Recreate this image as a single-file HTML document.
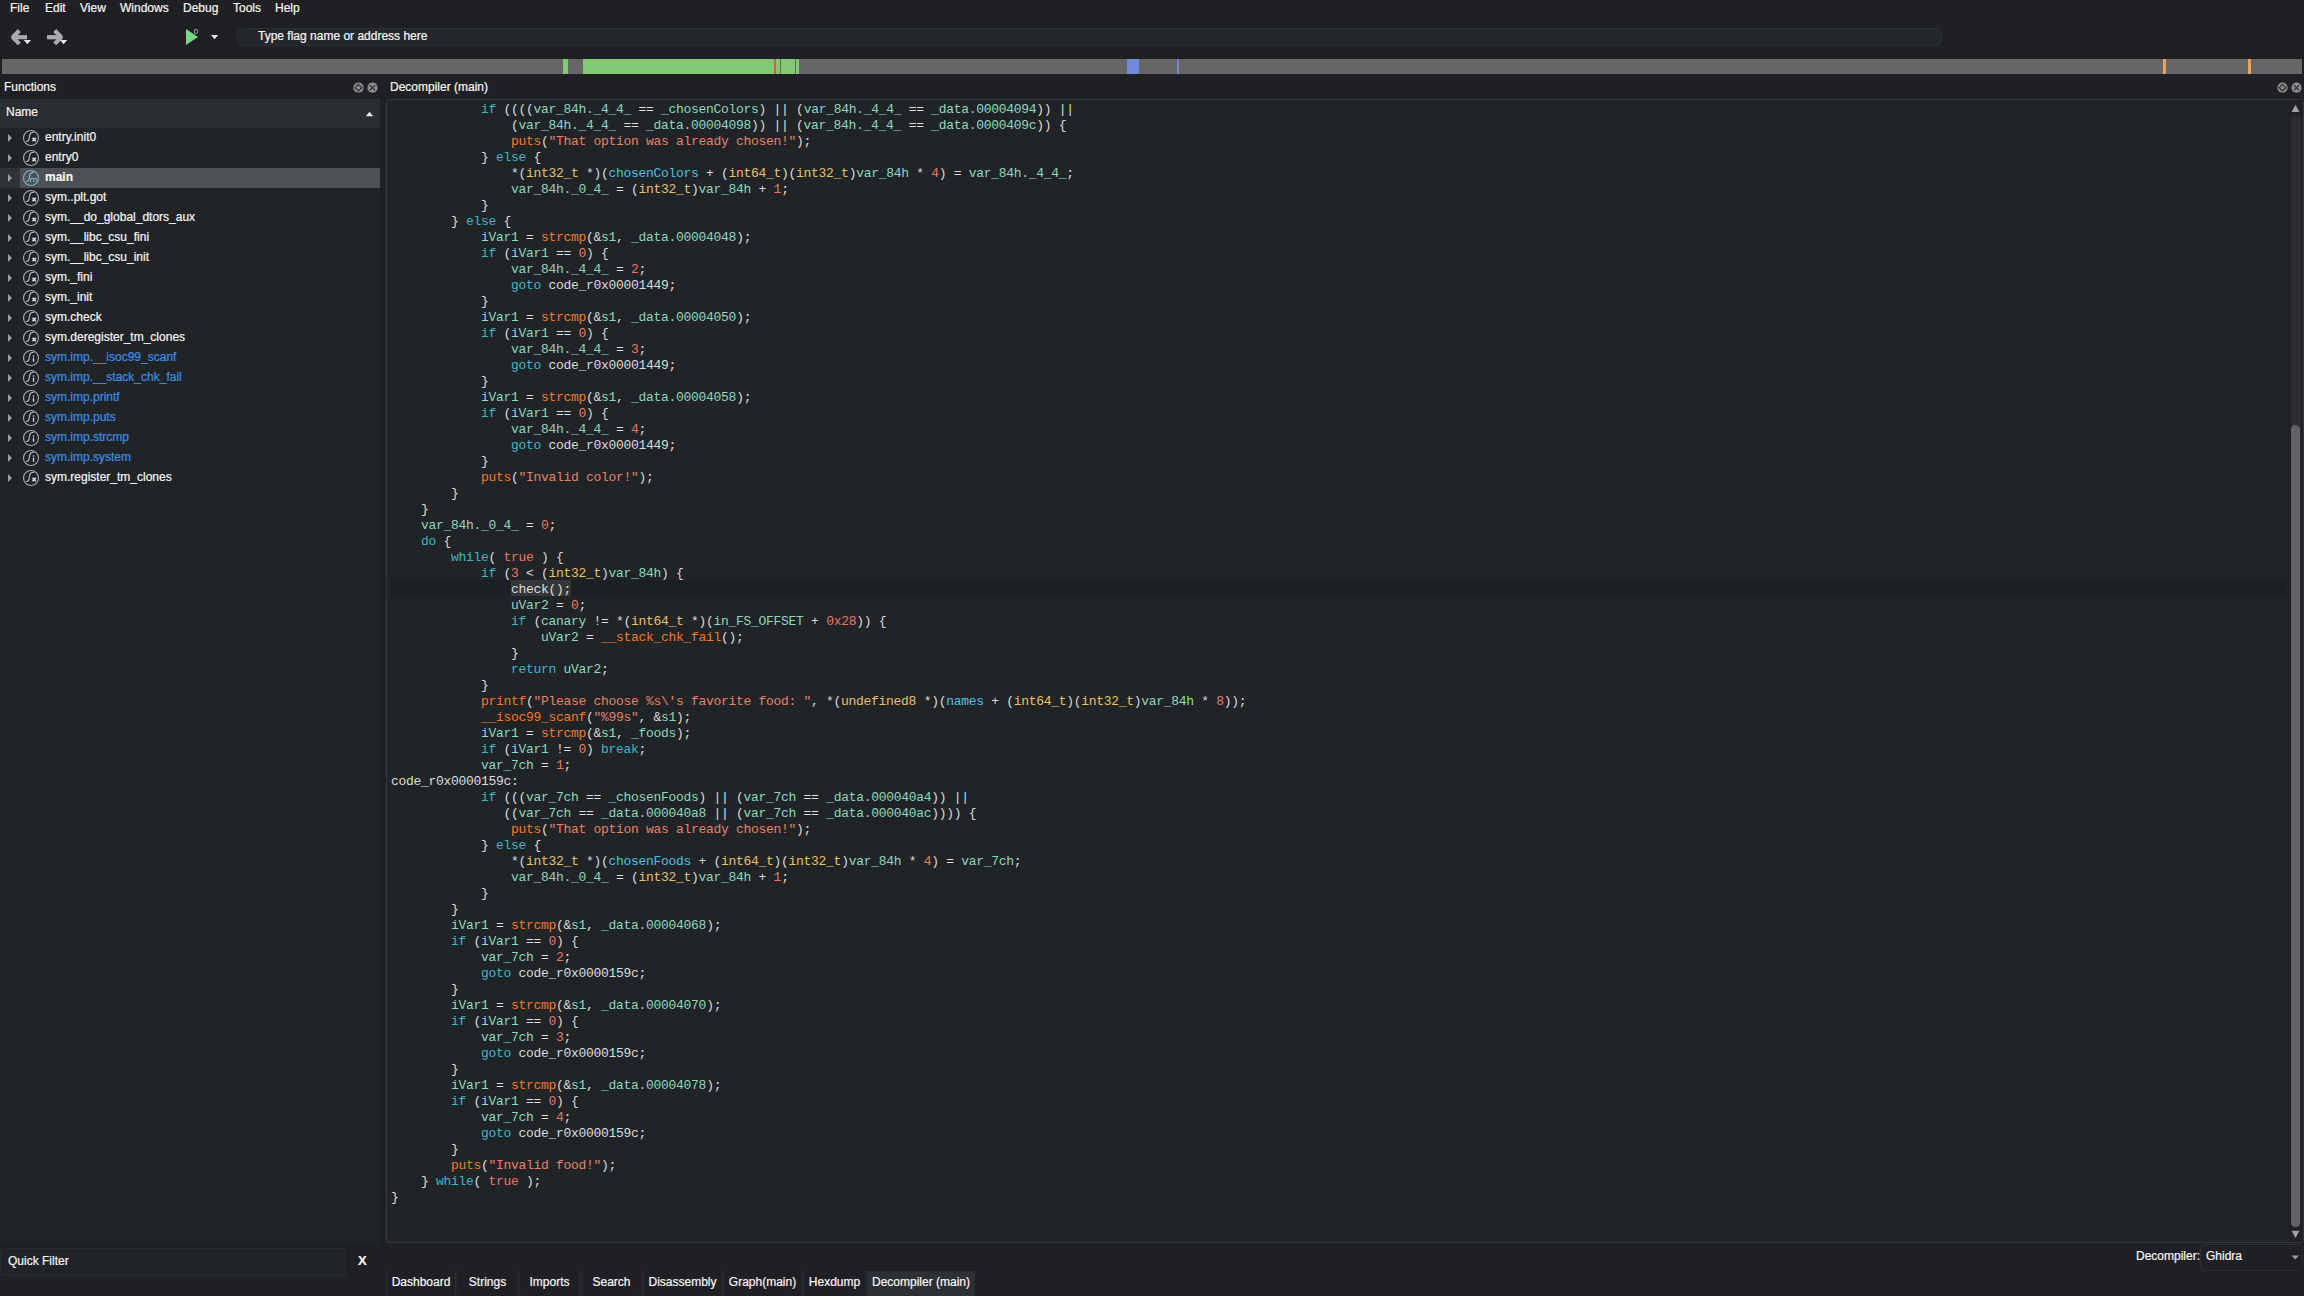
<!DOCTYPE html>
<html><head><meta charset="utf-8">
<style>
*{margin:0;padding:0;box-sizing:border-box}
html,body{width:2304px;height:1296px;overflow:hidden;background:#1f2023}
body{position:relative;font-family:"Liberation Sans",sans-serif;font-size:12px;color:#f6f6f6}
.t,.row span,.tab{-webkit-text-stroke:0.2px currentColor}
.a{position:absolute}
.t{position:absolute;line-height:14px;white-space:pre}
/* menu */
.menu .t{top:1px}
/* search */
#search{left:237px;top:28px;width:1705px;height:18px;border:1px solid #2c2f32;border-radius:5px;background:#25282b}
/* overview */
#ov{left:2px;top:59px;width:2300px;height:15px;background:#666}
#ov div{position:absolute;top:0;height:15px}
.g{background:#82c973}
.r{background:#e0584a}
.dk{background:#555}
.b{background:#7189d8}
.o{background:#e6a45c}
/* dock buttons */
.dbtn{position:absolute;width:11px;height:11px;border-radius:50%;background:#8f8f8f}
/* functions */
#fhead{left:0;top:99px;width:380px;height:29px;background:#2a2d31}
#flist{left:0;top:128px;width:380px;height:1118px;background:#212427;border-bottom-right-radius:4px}
.row{position:absolute;left:0;width:380px;height:20px}
.row.sel{background:#2f3236}
.row.sel::before{content:"";position:absolute;left:20px;top:0;width:360px;height:20px;background:#4d5055}
.row .tri{position:absolute;left:7.8px;top:6.2px;width:0;height:0;border-top:4.2px solid transparent;border-bottom:4.2px solid transparent;border-left:4.8px solid #a0a0a0}
.row .fi{position:absolute;left:22px;top:1px}
.row span{position:absolute;left:45px;top:2px;line-height:14px;white-space:pre;color:#f6f6f6}
.row.imp span{color:#3d8fe6}
.row.sel span{font-weight:bold}
/* quick filter */
#qf{left:0;top:1248px;width:346px;height:28px;border:1px solid #2a2d30;border-radius:3px;background:#212427}
/* decompiler panel */
#dp{left:386px;top:99px;width:1918px;height:1144px;border:1px solid #35383b;border-radius:3px;background:#212427;overflow:hidden}
#curline{left:4px;top:480px;width:1895px;height:16px;background:#1b2022}
#chk{left:124px;top:480px;width:60px;height:16px;background:#34373a}
#code{left:4px;top:2px;font-family:"Liberation Mono",monospace;font-size:13px;letter-spacing:-0.3px;color:#dcdcdc}
.cl{position:absolute;white-space:pre;line-height:16px;height:16px;transform:scaleY(1.03);transform-origin:0 11px}
.cl i{font-style:normal}
.kw{color:#3fb6c6}.var{color:#8cd8bc}.fn{color:#f07a2c}.st{color:#e4826a}.num{color:#ea7862}.ty{color:#e8c06a}.gl{color:#4cc0e4}
#sbcol{left:1901px;top:0;width:15px;height:1142px;background:#1f2124}
#sbtrack{left:1904px;top:15px;width:10px;height:1113px;border-radius:5px;background:#2b2c30}
#sbhandle{left:1904px;top:325px;width:9px;height:802px;border-radius:4.5px;background:#616263}
/* combobox */
#combo{left:2200px;top:1244px;width:103px;height:27px;border:1px solid #2b2e31;border-radius:3px;background:#1f2023}
/* tabs */
.tab{position:absolute;top:1271px;height:26px;border:1px solid #2b2d31;border-top:none;border-radius:0 0 3px 3px;text-align:center;line-height:14px;padding-top:4px;white-space:pre}
.tab.act{background:#2c2f33}
</style></head><body>
<!-- menu bar -->
<div class="menu">
<div class="t" style="left:10px">File</div>
<div class="t" style="left:45px">Edit</div>
<div class="t" style="left:80px">View</div>
<div class="t" style="left:120px">Windows</div>
<div class="t" style="left:183px">Debug</div>
<div class="t" style="left:233px">Tools</div>
<div class="t" style="left:275px">Help</div>
</div>
<!-- toolbar -->
<svg class="a" style="left:0;top:20px" width="240" height="35" viewBox="0 20 240 35">
 <path d="M19.3 30.5 L12.8 37.2 L19.3 43.9" fill="none" stroke="#a9aaae" stroke-width="4.2" stroke-linejoin="bevel"/>
 <rect x="14" y="35.1" width="13" height="4.2" fill="#a9aaae"/>
 <path d="M23.8 40 L31 40 L27.4 44.2 Z" fill="#e6e6e6"/>
 <path d="M54.7 30.5 L61.2 37.2 L54.7 43.9" fill="none" stroke="#a9aaae" stroke-width="4.2" stroke-linejoin="bevel"/>
 <rect x="47" y="35.1" width="13" height="4.2" fill="#a9aaae"/>
 <path d="M60 40 L67.2 40 L63.6 44.2 Z" fill="#e6e6e6"/>
 <path d="M186 29 L198 37 L186 45 Z" fill="#76da84"/>
 <path d="M194.6 29.3V33.5H195.9Q197.7 33.5 197.7 31.4Q197.7 29.3 195.9 29.3Z" fill="none" stroke="#a4a4a4" stroke-width="0.9"/>
 <path d="M211 35 L218.2 35 L214.6 39.3 Z" fill="#e6e6e6"/>
</svg>
<div id="search" class="a"></div>
<div class="t" style="left:258px;top:29px">Type flag name or address here</div>
<!-- overview bar -->
<div id="ov" class="a">
 <div class="g" style="left:561px;width:5px"></div>
 <div class="g" style="left:581px;width:191px"></div>
 <div class="r" style="left:772px;width:2px"></div>
 <div class="g" style="left:774px;width:4px"></div>
 <div class="g" style="left:779px;width:14px"></div>
 <div class="g" style="left:794px;width:3px"></div>
 <div class="b" style="left:1125px;width:12px"></div>
 <div class="b" style="left:1175px;width:2px"></div>
 <div class="o" style="left:2161px;width:3px"></div>
 <div class="o" style="left:2246px;width:3px"></div>
</div>
<!-- dock titles -->
<div class="t" style="left:4px;top:80px">Functions</div>
<div class="t" style="left:390px;top:80px">Decompiler (main)</div>
<svg class="a" style="left:0;top:75px" width="2304" height="25">
 <g fill="#8c8c8c"><circle cx="358.5" cy="12.7" r="5.1"/><circle cx="372.5" cy="12.7" r="5.1"/><circle cx="2282.5" cy="12.7" r="5.1"/><circle cx="2296.5" cy="12.7" r="5.1"/></g>
 <g fill="none" stroke="#2c2c2c" stroke-width="1.2">
  <path d="M358.5 9.4 L361.8 12.7 L358.5 16 L355.2 12.7 Z"/>
  <path d="M369.9 10.1 L375.1 15.3 M375.1 10.1 L369.9 15.3"/>
  <path d="M2282.5 9.4 L2285.8 12.7 L2282.5 16 L2279.2 12.7 Z"/>
  <path d="M2293.9 10.1 L2299.1 15.3 M2299.1 10.1 L2293.9 15.3"/>
 </g>
</svg>
<!-- functions panel -->
<div id="fhead" class="a"></div>
<div class="t" style="left:6px;top:105px">Name</div>
<svg class="a" style="left:365px;top:111px" width="9" height="6"><path d="M0.8 5.3 L4.5 0.8 L8.2 5.3 Z" fill="#e8e8e8"/></svg>
<div id="flist" class="a">
<div class="row" style="top:0px"><div class="tri"></div><svg class="fi" width="18" height="18" viewBox="0 0 18 18"><circle cx="9" cy="9" r="7.5" fill="none" stroke="#a9a9a9" stroke-width="1.1"/><path d="M4 12.5Q6.3 12.8 6.9 10.5L7.9 5.5Q8.6 3 12.2 3.3" fill="none" stroke="#c4c4c4" stroke-width="1.1"/><path d="M10.5 8.9L13.9 12.3M13.9 8.9L10.5 12.3" stroke="#dadada" stroke-width="1.6"/></svg><span>entry.init0</span></div>
<div class="row" style="top:20px"><div class="tri"></div><svg class="fi" width="18" height="18" viewBox="0 0 18 18"><circle cx="9" cy="9" r="7.5" fill="none" stroke="#a9a9a9" stroke-width="1.1"/><path d="M4 12.5Q6.3 12.8 6.9 10.5L7.9 5.5Q8.6 3 12.2 3.3" fill="none" stroke="#c4c4c4" stroke-width="1.1"/><path d="M10.5 8.9L13.9 12.3M13.9 8.9L10.5 12.3" stroke="#dadada" stroke-width="1.6"/></svg><span>entry0</span></div>
<div class="row sel" style="top:40px"><div class="tri"></div><svg class="fi" width="18" height="18" viewBox="0 0 18 18"><circle cx="9" cy="9" r="7.5" fill="none" stroke="#7fb0c8" stroke-width="1.1"/><path d="M4 12.5Q6.3 12.8 6.9 10.5L7.9 5.5Q8.6 3 12.2 3.3" fill="none" stroke="#8cbcd2" stroke-width="1.1"/><path d="M8.6 13V9.6M8.6 10.6Q8.6 9.3 10.2 9.3Q11.8 9.3 11.8 10.6V13M11.8 10.6Q11.8 9.3 13.4 9.3Q15 9.3 15 10.8V13" fill="none" stroke="#8cbcd2" stroke-width="1"/></svg><span>main</span></div>
<div class="row" style="top:60px"><div class="tri"></div><svg class="fi" width="18" height="18" viewBox="0 0 18 18"><circle cx="9" cy="9" r="7.5" fill="none" stroke="#a9a9a9" stroke-width="1.1"/><path d="M4 12.5Q6.3 12.8 6.9 10.5L7.9 5.5Q8.6 3 12.2 3.3" fill="none" stroke="#c4c4c4" stroke-width="1.1"/><path d="M10.5 8.9L13.9 12.3M13.9 8.9L10.5 12.3" stroke="#dadada" stroke-width="1.6"/></svg><span>sym..plt.got</span></div>
<div class="row" style="top:80px"><div class="tri"></div><svg class="fi" width="18" height="18" viewBox="0 0 18 18"><circle cx="9" cy="9" r="7.5" fill="none" stroke="#a9a9a9" stroke-width="1.1"/><path d="M4 12.5Q6.3 12.8 6.9 10.5L7.9 5.5Q8.6 3 12.2 3.3" fill="none" stroke="#c4c4c4" stroke-width="1.1"/><path d="M10.5 8.9L13.9 12.3M13.9 8.9L10.5 12.3" stroke="#dadada" stroke-width="1.6"/></svg><span>sym.__do_global_dtors_aux</span></div>
<div class="row" style="top:100px"><div class="tri"></div><svg class="fi" width="18" height="18" viewBox="0 0 18 18"><circle cx="9" cy="9" r="7.5" fill="none" stroke="#a9a9a9" stroke-width="1.1"/><path d="M4 12.5Q6.3 12.8 6.9 10.5L7.9 5.5Q8.6 3 12.2 3.3" fill="none" stroke="#c4c4c4" stroke-width="1.1"/><path d="M10.5 8.9L13.9 12.3M13.9 8.9L10.5 12.3" stroke="#dadada" stroke-width="1.6"/></svg><span>sym.__libc_csu_fini</span></div>
<div class="row" style="top:120px"><div class="tri"></div><svg class="fi" width="18" height="18" viewBox="0 0 18 18"><circle cx="9" cy="9" r="7.5" fill="none" stroke="#a9a9a9" stroke-width="1.1"/><path d="M4 12.5Q6.3 12.8 6.9 10.5L7.9 5.5Q8.6 3 12.2 3.3" fill="none" stroke="#c4c4c4" stroke-width="1.1"/><path d="M10.5 8.9L13.9 12.3M13.9 8.9L10.5 12.3" stroke="#dadada" stroke-width="1.6"/></svg><span>sym.__libc_csu_init</span></div>
<div class="row" style="top:140px"><div class="tri"></div><svg class="fi" width="18" height="18" viewBox="0 0 18 18"><circle cx="9" cy="9" r="7.5" fill="none" stroke="#a9a9a9" stroke-width="1.1"/><path d="M4 12.5Q6.3 12.8 6.9 10.5L7.9 5.5Q8.6 3 12.2 3.3" fill="none" stroke="#c4c4c4" stroke-width="1.1"/><path d="M10.5 8.9L13.9 12.3M13.9 8.9L10.5 12.3" stroke="#dadada" stroke-width="1.6"/></svg><span>sym._fini</span></div>
<div class="row" style="top:160px"><div class="tri"></div><svg class="fi" width="18" height="18" viewBox="0 0 18 18"><circle cx="9" cy="9" r="7.5" fill="none" stroke="#a9a9a9" stroke-width="1.1"/><path d="M4 12.5Q6.3 12.8 6.9 10.5L7.9 5.5Q8.6 3 12.2 3.3" fill="none" stroke="#c4c4c4" stroke-width="1.1"/><path d="M10.5 8.9L13.9 12.3M13.9 8.9L10.5 12.3" stroke="#dadada" stroke-width="1.6"/></svg><span>sym._init</span></div>
<div class="row" style="top:180px"><div class="tri"></div><svg class="fi" width="18" height="18" viewBox="0 0 18 18"><circle cx="9" cy="9" r="7.5" fill="none" stroke="#a9a9a9" stroke-width="1.1"/><path d="M4 12.5Q6.3 12.8 6.9 10.5L7.9 5.5Q8.6 3 12.2 3.3" fill="none" stroke="#c4c4c4" stroke-width="1.1"/><path d="M10.5 8.9L13.9 12.3M13.9 8.9L10.5 12.3" stroke="#dadada" stroke-width="1.6"/></svg><span>sym.check</span></div>
<div class="row" style="top:200px"><div class="tri"></div><svg class="fi" width="18" height="18" viewBox="0 0 18 18"><circle cx="9" cy="9" r="7.5" fill="none" stroke="#a9a9a9" stroke-width="1.1"/><path d="M4 12.5Q6.3 12.8 6.9 10.5L7.9 5.5Q8.6 3 12.2 3.3" fill="none" stroke="#c4c4c4" stroke-width="1.1"/><path d="M10.5 8.9L13.9 12.3M13.9 8.9L10.5 12.3" stroke="#dadada" stroke-width="1.6"/></svg><span>sym.deregister_tm_clones</span></div>
<div class="row imp" style="top:220px"><div class="tri"></div><svg class="fi" width="18" height="18" viewBox="0 0 18 18"><circle cx="9" cy="9" r="7.5" fill="none" stroke="#a9a9a9" stroke-width="1.1"/><path d="M4 12.5Q6.3 12.8 6.9 10.5L7.9 5.5Q8.6 3 12.2 3.3" fill="none" stroke="#c4c4c4" stroke-width="1.1"/><path d="M11.5 8.7V12.8" stroke="#d4d4d4" stroke-width="1.3"/><path d="M11.5 6.3V7.8" stroke="#d4d4d4" stroke-width="1.3"/></svg><span>sym.imp.__isoc99_scanf</span></div>
<div class="row imp" style="top:240px"><div class="tri"></div><svg class="fi" width="18" height="18" viewBox="0 0 18 18"><circle cx="9" cy="9" r="7.5" fill="none" stroke="#a9a9a9" stroke-width="1.1"/><path d="M4 12.5Q6.3 12.8 6.9 10.5L7.9 5.5Q8.6 3 12.2 3.3" fill="none" stroke="#c4c4c4" stroke-width="1.1"/><path d="M11.5 8.7V12.8" stroke="#d4d4d4" stroke-width="1.3"/><path d="M11.5 6.3V7.8" stroke="#d4d4d4" stroke-width="1.3"/></svg><span>sym.imp.__stack_chk_fail</span></div>
<div class="row imp" style="top:260px"><div class="tri"></div><svg class="fi" width="18" height="18" viewBox="0 0 18 18"><circle cx="9" cy="9" r="7.5" fill="none" stroke="#a9a9a9" stroke-width="1.1"/><path d="M4 12.5Q6.3 12.8 6.9 10.5L7.9 5.5Q8.6 3 12.2 3.3" fill="none" stroke="#c4c4c4" stroke-width="1.1"/><path d="M11.5 8.7V12.8" stroke="#d4d4d4" stroke-width="1.3"/><path d="M11.5 6.3V7.8" stroke="#d4d4d4" stroke-width="1.3"/></svg><span>sym.imp.printf</span></div>
<div class="row imp" style="top:280px"><div class="tri"></div><svg class="fi" width="18" height="18" viewBox="0 0 18 18"><circle cx="9" cy="9" r="7.5" fill="none" stroke="#a9a9a9" stroke-width="1.1"/><path d="M4 12.5Q6.3 12.8 6.9 10.5L7.9 5.5Q8.6 3 12.2 3.3" fill="none" stroke="#c4c4c4" stroke-width="1.1"/><path d="M11.5 8.7V12.8" stroke="#d4d4d4" stroke-width="1.3"/><path d="M11.5 6.3V7.8" stroke="#d4d4d4" stroke-width="1.3"/></svg><span>sym.imp.puts</span></div>
<div class="row imp" style="top:300px"><div class="tri"></div><svg class="fi" width="18" height="18" viewBox="0 0 18 18"><circle cx="9" cy="9" r="7.5" fill="none" stroke="#a9a9a9" stroke-width="1.1"/><path d="M4 12.5Q6.3 12.8 6.9 10.5L7.9 5.5Q8.6 3 12.2 3.3" fill="none" stroke="#c4c4c4" stroke-width="1.1"/><path d="M11.5 8.7V12.8" stroke="#d4d4d4" stroke-width="1.3"/><path d="M11.5 6.3V7.8" stroke="#d4d4d4" stroke-width="1.3"/></svg><span>sym.imp.strcmp</span></div>
<div class="row imp" style="top:320px"><div class="tri"></div><svg class="fi" width="18" height="18" viewBox="0 0 18 18"><circle cx="9" cy="9" r="7.5" fill="none" stroke="#a9a9a9" stroke-width="1.1"/><path d="M4 12.5Q6.3 12.8 6.9 10.5L7.9 5.5Q8.6 3 12.2 3.3" fill="none" stroke="#c4c4c4" stroke-width="1.1"/><path d="M11.5 8.7V12.8" stroke="#d4d4d4" stroke-width="1.3"/><path d="M11.5 6.3V7.8" stroke="#d4d4d4" stroke-width="1.3"/></svg><span>sym.imp.system</span></div>
<div class="row" style="top:340px"><div class="tri"></div><svg class="fi" width="18" height="18" viewBox="0 0 18 18"><circle cx="9" cy="9" r="7.5" fill="none" stroke="#a9a9a9" stroke-width="1.1"/><path d="M4 12.5Q6.3 12.8 6.9 10.5L7.9 5.5Q8.6 3 12.2 3.3" fill="none" stroke="#c4c4c4" stroke-width="1.1"/><path d="M10.5 8.9L13.9 12.3M13.9 8.9L10.5 12.3" stroke="#dadada" stroke-width="1.6"/></svg><span>sym.register_tm_clones</span></div>
</div>
<div id="qf" class="a"></div>
<div class="t" style="left:8px;top:1254px">Quick Filter</div>
<div class="t" style="left:358px;top:1254px;font-weight:bold;font-size:13px">X</div>
<!-- decompiler panel -->
<div id="dp" class="a">
 <div id="curline" class="a"></div>
 <div id="chk" class="a"></div>
 <div id="code" class="a">
<div class="cl" style="top:0px;left:90.0px"><i class="kw">if</i> ((((<i class="var">var_84h._4_4_</i> == <i class="var">_chosenColors</i>) || (<i class="var">var_84h._4_4_</i> == <i class="var">_data.00004094</i>)) ||</div>
<div class="cl" style="top:16px;left:120.0px">(<i class="var">var_84h._4_4_</i> == <i class="var">_data.00004098</i>)) || (<i class="var">var_84h._4_4_</i> == <i class="var">_data.0000409c</i>)) {</div>
<div class="cl" style="top:32px;left:120.0px"><i class="fn">puts</i>(<i class="st">"That option was already chosen!"</i>);</div>
<div class="cl" style="top:48px;left:90.0px">} <i class="kw">else</i> {</div>
<div class="cl" style="top:64px;left:120.0px">*(<i class="ty">int32_t</i> *)(<i class="gl">chosenColors</i> + (<i class="ty">int64_t</i>)(<i class="ty">int32_t</i>)<i class="var">var_84h</i> * <i class="num">4</i>) = <i class="var">var_84h._4_4_</i>;</div>
<div class="cl" style="top:80px;left:120.0px"><i class="var">var_84h._0_4_</i> = (<i class="ty">int32_t</i>)<i class="var">var_84h</i> + <i class="num">1</i>;</div>
<div class="cl" style="top:96px;left:90.0px">}</div>
<div class="cl" style="top:112px;left:60.0px">} <i class="kw">else</i> {</div>
<div class="cl" style="top:128px;left:90.0px"><i class="var">iVar1</i> = <i class="fn">strcmp</i>(&amp;<i class="var">s1</i>, <i class="var">_data.00004048</i>);</div>
<div class="cl" style="top:144px;left:90.0px"><i class="kw">if</i> (<i class="var">iVar1</i> == <i class="num">0</i>) {</div>
<div class="cl" style="top:160px;left:120.0px"><i class="var">var_84h._4_4_</i> = <i class="num">2</i>;</div>
<div class="cl" style="top:176px;left:120.0px"><i class="kw">goto</i> code_r0x00001449;</div>
<div class="cl" style="top:192px;left:90.0px">}</div>
<div class="cl" style="top:208px;left:90.0px"><i class="var">iVar1</i> = <i class="fn">strcmp</i>(&amp;<i class="var">s1</i>, <i class="var">_data.00004050</i>);</div>
<div class="cl" style="top:224px;left:90.0px"><i class="kw">if</i> (<i class="var">iVar1</i> == <i class="num">0</i>) {</div>
<div class="cl" style="top:240px;left:120.0px"><i class="var">var_84h._4_4_</i> = <i class="num">3</i>;</div>
<div class="cl" style="top:256px;left:120.0px"><i class="kw">goto</i> code_r0x00001449;</div>
<div class="cl" style="top:272px;left:90.0px">}</div>
<div class="cl" style="top:288px;left:90.0px"><i class="var">iVar1</i> = <i class="fn">strcmp</i>(&amp;<i class="var">s1</i>, <i class="var">_data.00004058</i>);</div>
<div class="cl" style="top:304px;left:90.0px"><i class="kw">if</i> (<i class="var">iVar1</i> == <i class="num">0</i>) {</div>
<div class="cl" style="top:320px;left:120.0px"><i class="var">var_84h._4_4_</i> = <i class="num">4</i>;</div>
<div class="cl" style="top:336px;left:120.0px"><i class="kw">goto</i> code_r0x00001449;</div>
<div class="cl" style="top:352px;left:90.0px">}</div>
<div class="cl" style="top:368px;left:90.0px"><i class="fn">puts</i>(<i class="st">"Invalid color!"</i>);</div>
<div class="cl" style="top:384px;left:60.0px">}</div>
<div class="cl" style="top:400px;left:30.0px">}</div>
<div class="cl" style="top:416px;left:30.0px"><i class="var">var_84h._0_4_</i> = <i class="num">0</i>;</div>
<div class="cl" style="top:432px;left:30.0px"><i class="kw">do</i> {</div>
<div class="cl" style="top:448px;left:60.0px"><i class="kw">while</i>( <i class="num">true</i> ) {</div>
<div class="cl" style="top:464px;left:90.0px"><i class="kw">if</i> (<i class="num">3</i> &lt; (<i class="ty">int32_t</i>)<i class="var">var_84h</i>) {</div>
<div class="cl" style="top:480px;left:120.0px">check();</div>
<div class="cl" style="top:496px;left:120.0px"><i class="var">uVar2</i> = <i class="num">0</i>;</div>
<div class="cl" style="top:512px;left:120.0px"><i class="kw">if</i> (<i class="var">canary</i> != *(<i class="ty">int64_t</i> *)(<i class="var">in_FS_OFFSET</i> + <i class="num">0x28</i>)) {</div>
<div class="cl" style="top:528px;left:150.0px"><i class="var">uVar2</i> = <i class="fn">__stack_chk_fail</i>();</div>
<div class="cl" style="top:544px;left:120.0px">}</div>
<div class="cl" style="top:560px;left:120.0px"><i class="kw">return</i> <i class="var">uVar2</i>;</div>
<div class="cl" style="top:576px;left:90.0px">}</div>
<div class="cl" style="top:592px;left:90.0px"><i class="fn">printf</i>(<i class="st">"Please choose %s\'s favorite food: "</i>, *(<i class="ty">undefined8</i> *)(<i class="gl">names</i> + (<i class="ty">int64_t</i>)(<i class="ty">int32_t</i>)<i class="var">var_84h</i> * <i class="num">8</i>));</div>
<div class="cl" style="top:608px;left:90.0px"><i class="fn">__isoc99_scanf</i>(<i class="st">"%99s"</i>, &amp;<i class="var">s1</i>);</div>
<div class="cl" style="top:624px;left:90.0px"><i class="var">iVar1</i> = <i class="fn">strcmp</i>(&amp;<i class="var">s1</i>, <i class="var">_foods</i>);</div>
<div class="cl" style="top:640px;left:90.0px"><i class="kw">if</i> (<i class="var">iVar1</i> != <i class="num">0</i>) <i class="kw">break</i>;</div>
<div class="cl" style="top:656px;left:90.0px"><i class="var">var_7ch</i> = <i class="num">1</i>;</div>
<div class="cl" style="top:672px;left:0.0px">code_r0x0000159c:</div>
<div class="cl" style="top:688px;left:90.0px"><i class="kw">if</i> (((<i class="var">var_7ch</i> == <i class="var">_chosenFoods</i>) || (<i class="var">var_7ch</i> == <i class="var">_data.000040a4</i>)) ||</div>
<div class="cl" style="top:704px;left:112.5px">((<i class="var">var_7ch</i> == <i class="var">_data.000040a8</i> || (<i class="var">var_7ch</i> == <i class="var">_data.000040ac</i>)))) {</div>
<div class="cl" style="top:720px;left:120.0px"><i class="fn">puts</i>(<i class="st">"That option was already chosen!"</i>);</div>
<div class="cl" style="top:736px;left:90.0px">} <i class="kw">else</i> {</div>
<div class="cl" style="top:752px;left:120.0px">*(<i class="ty">int32_t</i> *)(<i class="gl">chosenFoods</i> + (<i class="ty">int64_t</i>)(<i class="ty">int32_t</i>)<i class="var">var_84h</i> * <i class="num">4</i>) = <i class="var">var_7ch</i>;</div>
<div class="cl" style="top:768px;left:120.0px"><i class="var">var_84h._0_4_</i> = (<i class="ty">int32_t</i>)<i class="var">var_84h</i> + <i class="num">1</i>;</div>
<div class="cl" style="top:784px;left:90.0px">}</div>
<div class="cl" style="top:800px;left:60.0px">}</div>
<div class="cl" style="top:816px;left:60.0px"><i class="var">iVar1</i> = <i class="fn">strcmp</i>(&amp;<i class="var">s1</i>, <i class="var">_data.00004068</i>);</div>
<div class="cl" style="top:832px;left:60.0px"><i class="kw">if</i> (<i class="var">iVar1</i> == <i class="num">0</i>) {</div>
<div class="cl" style="top:848px;left:90.0px"><i class="var">var_7ch</i> = <i class="num">2</i>;</div>
<div class="cl" style="top:864px;left:90.0px"><i class="kw">goto</i> code_r0x0000159c;</div>
<div class="cl" style="top:880px;left:60.0px">}</div>
<div class="cl" style="top:896px;left:60.0px"><i class="var">iVar1</i> = <i class="fn">strcmp</i>(&amp;<i class="var">s1</i>, <i class="var">_data.00004070</i>);</div>
<div class="cl" style="top:912px;left:60.0px"><i class="kw">if</i> (<i class="var">iVar1</i> == <i class="num">0</i>) {</div>
<div class="cl" style="top:928px;left:90.0px"><i class="var">var_7ch</i> = <i class="num">3</i>;</div>
<div class="cl" style="top:944px;left:90.0px"><i class="kw">goto</i> code_r0x0000159c;</div>
<div class="cl" style="top:960px;left:60.0px">}</div>
<div class="cl" style="top:976px;left:60.0px"><i class="var">iVar1</i> = <i class="fn">strcmp</i>(&amp;<i class="var">s1</i>, <i class="var">_data.00004078</i>);</div>
<div class="cl" style="top:992px;left:60.0px"><i class="kw">if</i> (<i class="var">iVar1</i> == <i class="num">0</i>) {</div>
<div class="cl" style="top:1008px;left:90.0px"><i class="var">var_7ch</i> = <i class="num">4</i>;</div>
<div class="cl" style="top:1024px;left:90.0px"><i class="kw">goto</i> code_r0x0000159c;</div>
<div class="cl" style="top:1040px;left:60.0px">}</div>
<div class="cl" style="top:1056px;left:60.0px"><i class="fn">puts</i>(<i class="st">"Invalid food!"</i>);</div>
<div class="cl" style="top:1072px;left:30.0px">} <i class="kw">while</i>( <i class="num">true</i> );</div>
<div class="cl" style="top:1088px;left:0.0px">}</div>
 </div>
 <div id="sbcol" class="a"></div>
 <div id="sbtrack" class="a"></div>
 <div id="sbhandle" class="a"></div>
 <svg class="a" style="left:1904px;top:4px" width="10" height="9"><path d="M0.5 8 L4.5 0.8 L8.5 8 Z" fill="#a0a0a0"/></svg>
 <svg class="a" style="left:1904px;top:1130px" width="10" height="9"><path d="M0.5 0.8 L4.5 8 L8.5 0.8 Z" fill="#a0a0a0"/></svg>
</div>
<div class="t" style="left:2136px;top:1249px">Decompiler:</div>
<div id="combo" class="a"></div>
<div class="t" style="left:2206px;top:1249px">Ghidra</div>
<svg class="a" style="left:2291px;top:1255px" width="9" height="5"><path d="M0.5 0.5 L8 0.5 L4.25 4.5 Z" fill="#9a9a9a"/></svg>
<!-- tabs -->
<div class="tab" style="left:386px;width:70px">Dashboard</div>
<div class="tab" style="left:457px;width:61px">Strings</div>
<div class="tab" style="left:519px;width:61px">Imports</div>
<div class="tab" style="left:581px;width:61px">Search</div>
<div class="tab" style="left:643px;width:79px">Disassembly</div>
<div class="tab" style="left:723px;width:79px">Graph(main)</div>
<div class="tab" style="left:803px;width:63px">Hexdump</div>
<div class="tab act" style="left:867px;width:108px">Decompiler (main)</div>
</body></html>
